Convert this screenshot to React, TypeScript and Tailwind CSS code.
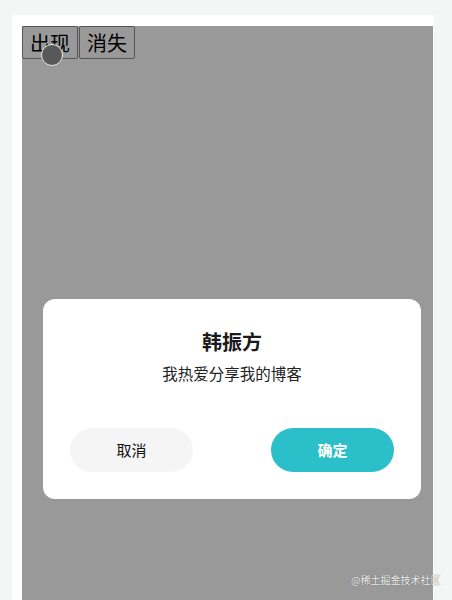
export default function App() {
  return (
    <div
      className="relative h-[600px] w-[452px] overflow-hidden bg-[#f4f5f5]"
      style={{ fontFamily: '"Noto Sans CJK SC", "Noto Sans", sans-serif' }}
    >
      <div className="ml-[12px] mt-[15px] h-[585px] w-[422px] bg-white pl-[10px] pr-px pt-[11px]">
        <div className="relative h-full w-full bg-[#999999]">
          <div className="flex">
            <button className="h-[33px] rounded-[2px] border border-[#555] px-[7px] text-[20px] leading-none text-black">
              出现
            </button>
            <button className="ml-px h-[33px] rounded-[2px] border border-[#555] px-[7px] text-[20px] leading-none text-black">
              消失
            </button>
          </div>

          <div className="absolute left-[21px] top-[273px] h-[200px] w-[378px] rounded-[12px] bg-white pt-[31px]">
            <h2 className="text-center text-[20px] font-bold leading-[24px] text-[#1a1a1a]">韩振方</h2>
            <p className="mt-[8px] text-center text-[15.5px] leading-[22px] text-[#222]">我热爱分享我的博客</p>
            <div className="mt-[44px] flex justify-between px-[27px]">
              <button className="h-[44px] w-[123px] rounded-full bg-[#f5f5f5] text-[15px] text-[#111]">取消</button>
              <button className="h-[44px] w-[123px] rounded-full bg-[#2bbfca] text-[15px] font-bold text-white">
                确定
              </button>
            </div>
          </div>
        </div>
      </div>

      <div className="absolute left-[41px] top-[44px] h-[22px] w-[22px] rounded-full border-[1.5px] border-[#e5e5e5] bg-[#585858]" />

      <div className="absolute left-[351px] top-[573px] text-[10px] leading-[14px] text-[#eeeeee] [text-shadow:0_0_1px_#555]">
        @稀土掘金技术社区
      </div>
    </div>
  );
}
